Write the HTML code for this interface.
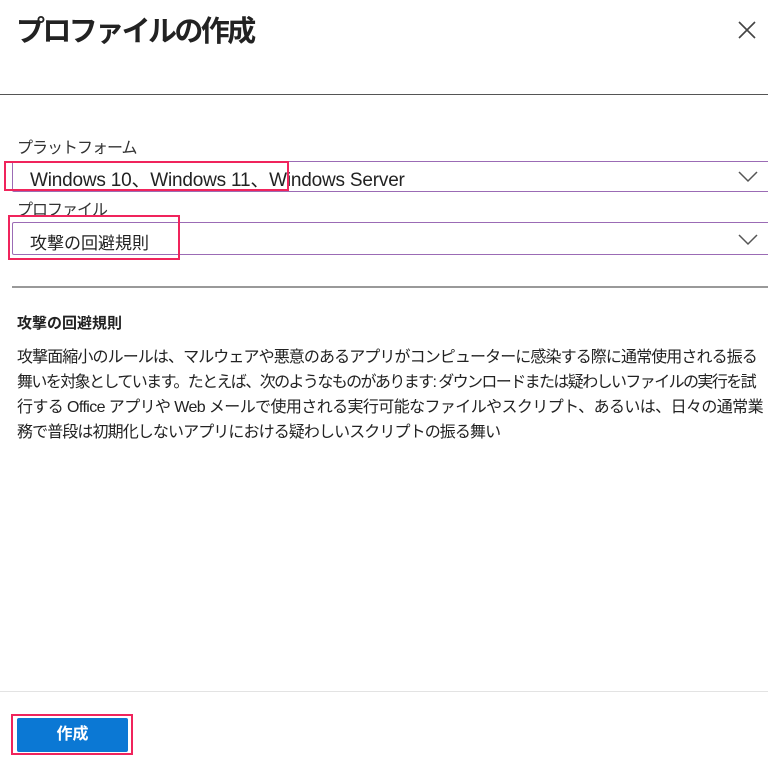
<!DOCTYPE html>
<html><head><meta charset="utf-8"><style>
body{margin:0;width:768px;height:764px;background:#fff;position:relative;overflow:hidden;font-family:"Liberation Sans","Noto Sans CJK JP",sans-serif;color:#222}
.a{position:absolute}
</style></head><body>
<div class="a" style="left:16px;top:8px;font-size:29px;font-weight:bold;color:#222;letter-spacing:-2.6px">プロファイルの作成</div>
<svg class="a" style="left:738px;top:21px" width="18" height="18"><path d="M1 1L17 17M17 1L1 17" stroke="#444" stroke-width="1.6"/></svg>
<div class="a" style="left:0;top:94px;width:768px;height:1px;background:#555"></div>
<div class="a" style="left:17px;top:134px;font-size:16px;color:#333;letter-spacing:-1px">プラットフォーム</div>
<div class="a" style="left:12px;top:161px;width:760px;height:31px;border:1px solid #9b6bb5;border-radius:2px;box-sizing:border-box"></div>
<div class="a" style="left:30px;top:165px;font-size:19px;color:#222;white-space:nowrap;letter-spacing:-0.2px">Windows 10、Windows 11、Windows Server</div>
<svg class="a" style="left:738px;top:171px" width="20" height="12"><path d="M1 1L10 10L19 1" stroke="#555" stroke-width="1.5" fill="none"/></svg>
<div class="a" style="left:4px;top:161px;width:285px;height:30px;border:2px solid #f0245c;box-sizing:border-box"></div>
<div class="a" style="left:17px;top:196px;font-size:16px;color:#333;letter-spacing:-1px">プロファイル</div>
<div class="a" style="left:12px;top:222px;width:760px;height:33px;border:1px solid #9b6bb5;border-radius:2px;box-sizing:border-box"></div>
<div class="a" style="left:30px;top:229px;font-size:17px;color:#222">攻撃の回避規則</div>
<svg class="a" style="left:738px;top:234px" width="20" height="12"><path d="M1 1L10 10L19 1" stroke="#555" stroke-width="1.5" fill="none"/></svg>
<div class="a" style="left:8px;top:215px;width:172px;height:45px;border:2px solid #f0245c;box-sizing:border-box"></div>
<div class="a" style="left:12px;top:286px;width:756px;height:2px;background:#999"></div>
<div class="a" style="left:17px;top:312px;font-size:15px;font-weight:bold">攻撃の回避規則</div>
<div class="a" style="left:17px;top:345px;width:760px;font-size:16px;line-height:25px;color:#222;letter-spacing:-0.9px;white-space:nowrap">攻撃面縮小のルールは、マルウェアや悪意のあるアプリがコンピューターに感染する際に通常使用される振る<br><span style="letter-spacing:-1.6px">舞いを対象としています。たとえば、次のようなものがあります: ダウンロードまたは疑わしいファイルの実行を試</span><br><span style="letter-spacing:-0.6px">行する Office アプリや Web メールで使用される実行可能なファイルやスクリプト、あるいは、日々の通常業</span><br>務で普段は初期化しないアプリにおける疑わしいスクリプトの振る舞い</div>
<div class="a" style="left:0;top:691px;width:768px;height:1px;background:#e3e3e3"></div>
<div class="a" style="left:17px;top:718px;width:111px;height:34px;background:#0b78d4;border-radius:2px;color:#fff;font-weight:bold;font-size:16px;text-align:center;line-height:34px">作成</div>
<div class="a" style="left:11px;top:714px;width:122px;height:41px;border:2px solid #f0245c;box-sizing:border-box"></div>
</body></html>
